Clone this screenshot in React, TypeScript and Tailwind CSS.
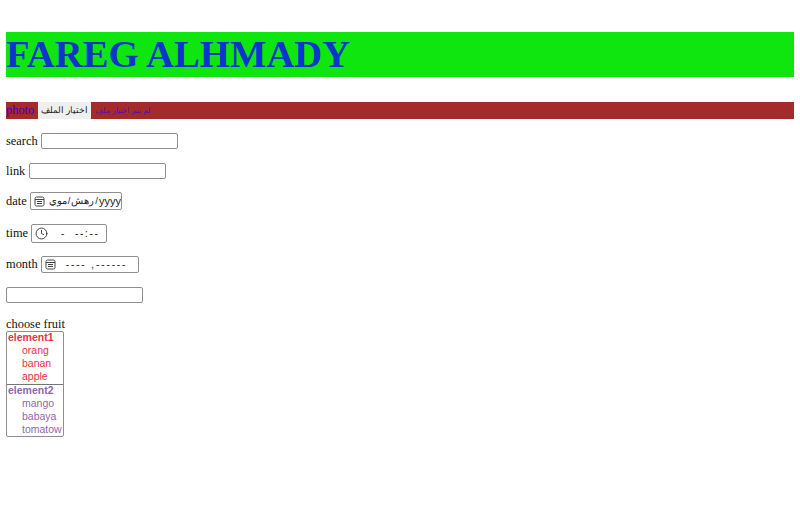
import React from "react";
import { Clock } from "lucide-react";

const serif = "font-['Liberation_Serif',serif]";
const sans = "font-['Liberation_Sans',Arial,sans-serif]";

const CalendarIcon = () => (
  <svg width="11" height="11" viewBox="0 0 11 11" fill="none" stroke="#444" strokeWidth="1" className="shrink-0">
    <rect x="1" y="1" width="9" height="9" rx="1.5" />
    <path d="M1 3.5h9M3 5.5h5M3 7.5h5" />
  </svg>
);

const inputBox = "h-4 w-[137px] rounded-[2px] border border-[#8f8f8f] bg-white";

const FruitGroup: React.FC<{ label: string; items: string[]; color: string; last?: boolean }> = ({
  label,
  items,
  color,
  last,
}) => (
  <div className={`${color} ${last ? "h-[53px]" : "h-[53px] border-b border-[#767676]"} overflow-hidden pl-[1px]`}>
    <div className="h-[13px] text-[10.5px] leading-[11px] font-bold">{label}</div>
    {items.map((item) => (
      <div key={item} className="h-[13px] pl-[14px] text-[10.5px] leading-[11px]">
        {item}
      </div>
    ))}
  </div>
);

export default function App() {
  return (
    <div className={`${serif} h-[530px] w-[800px] overflow-hidden bg-white px-[6px] pt-8 text-[12.4px] text-[#111]`}>
      <h1 className="h-[45px] w-[788px] bg-[#0fe60f] text-[38.7px] leading-[45px] font-bold text-[#0b35cc]">
        FAREG ALHMADY
      </h1>

      <div className="mt-[25px] flex h-[17px] w-[788px] items-center bg-[#a52a2a] text-[#3a00c8]">
        <span>photo</span>
        <span className={`${sans} ml-[4px] flex h-[17px] w-[53px] items-center justify-center bg-[#efefef] text-[8.5px] text-[#222]`}>
          اختيار الملف
        </span>
        <span className={`${sans} ml-[4px] text-[7.75px] text-[#5a0fb0]`}>لم يتم اختيار ملف</span>
      </div>

      <div className="mt-[14px] flex h-4 items-center gap-[3px]">
        <span>search</span>
        <div className={inputBox} />
      </div>

      <div className="mt-[14px] flex h-4 items-center gap-[4px]">
        <span>link</span>
        <div className={inputBox} />
      </div>

      <div className="mt-[13px] flex h-[18px] items-center gap-[3px]">
        <span>date</span>
        <div className="flex h-[18px] w-[92px] items-center rounded-[2px] border border-[#8f8f8f] pl-[3px]">
          <CalendarIcon />
          <span className={`${sans} ml-[4px] flex items-center gap-[1px] whitespace-nowrap text-[9.5px] text-[#222]`}>
            <span>موي</span>
            <span>/</span>
            <span>رهش</span>
            <span>/</span>
            <span className="text-[11px]">yyyy</span>
          </span>
        </div>
      </div>

      <div className="mt-[14px] flex h-[19px] items-center gap-[3px]">
        <span>time</span>
        <div className="flex h-[19px] w-[76px] items-center rounded-[2px] border border-[#8f8f8f] pl-[3px]">
          <Clock size={13} strokeWidth={1.5} className="shrink-0 text-[#222]" />
          <span className={`${sans} ml-[13px] whitespace-pre text-[10px] tracking-[1.7px] text-[#222]`}>{"-  --:--"}</span>
        </div>
      </div>

      <div className="mt-[13px] flex h-[17px] items-center gap-[3px]">
        <span>month</span>
        <div className="flex h-[17px] w-[98px] items-center rounded-[2px] border border-[#8f8f8f] pl-[3px]">
          <CalendarIcon />
          <span className={`${sans} ml-[10px] whitespace-pre text-[10px] tracking-[1.9px] text-[#222]`}>{"---- ,------"}</span>
        </div>
      </div>

      <div className={`${inputBox} mt-[14px]`} />

      <div className="mt-[14px] h-[14px] leading-[14px]">choose fruit</div>

      <div className={`${sans} h-[106px] w-[58px] overflow-hidden rounded-[2px] border border-[#8f8f8f]`}>
        <FruitGroup label="element1" items={["orang", "banan", "apple"]} color="text-[#e8313f]" />
        <FruitGroup label="element2" items={["mango", "babaya", "tomatow"]} color="text-[#9166ad]" last />
      </div>
    </div>
  );
}
